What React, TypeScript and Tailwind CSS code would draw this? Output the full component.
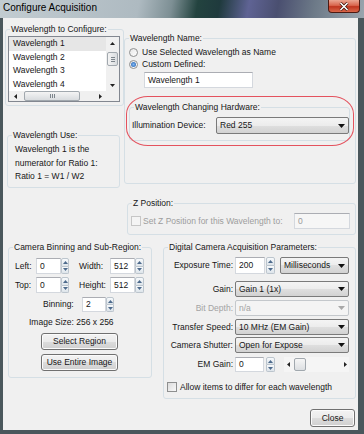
import React from "react";

type Props = { className?: string; children?: React.ReactNode };

function GroupBox({ label, className = "", children }: Props & { label: string }) {
  return (
    <div className={`relative border border-[#d5dfe5] rounded-[3px] ${className}`}>
      <span className="absolute -top-[7px] left-[4px] bg-[#f0f0f0] px-[1px] leading-[12px] whitespace-nowrap">
        {label}
      </span>
      {children}
    </div>
  );
}

function TextBox({ value, className = "", disabled }: { value: string; className?: string; disabled?: boolean }) {
  return (
    <div
      className={`border border-[#d4d8de] border-t-[#abadb3] pl-[3px] flex items-center leading-none ${
        disabled ? "bg-[#f6f6f6] border-[#c9cdd2] text-[#9a9a9a]" : "bg-white"
      } ${className}`}
    >
      {value}
    </div>
  );
}

function Spin({ className = "" }: Props) {
  return (
    <div className={`flex flex-col ${className}`}>
      <div className="flex-1 border border-[#bcc5cd] rounded-t-[2px] bg-linear-to-b from-[#f8fafc] to-[#dde4ea] flex items-center justify-center">
        <svg width="5" height="3" viewBox="0 0 5 3">
          <path d="M0 3L2.5 0L5 3Z" fill="#4d6a8c" />
        </svg>
      </div>
      <div className="flex-1 border border-t-0 border-[#bcc5cd] rounded-b-[2px] bg-linear-to-b from-[#f8fafc] to-[#dde4ea] flex items-center justify-center">
        <svg width="5" height="3" viewBox="0 0 5 3">
          <path d="M0 0L2.5 3L5 0Z" fill="#4d6a8c" />
        </svg>
      </div>
    </div>
  );
}

function Combo({ value, className = "", disabled }: { value: string; className?: string; disabled?: boolean }) {
  return (
    <div
      className={`flex items-center justify-between rounded-[2px] border pl-[3px] pr-[3px] leading-none whitespace-nowrap ${
        disabled
          ? "border-[#c4c8cc] bg-[#f4f4f4] text-[#a3a3a3]"
          : "border-[#7a7a7a] bg-[linear-gradient(#f4f4f4_0%,#ececec_50%,#dfdfdf_50%,#d2d2d2_100%)]"
      } ${className}`}
    >
      <span>{value}</span>
      <svg width="7" height="4" viewBox="0 0 7 4" className="shrink-0">
        <path d="M0 0H7L3.5 4Z" fill={disabled ? "#a8a8a8" : "#111"} />
      </svg>
    </div>
  );
}

function Button({ label, className = "" }: { label: string; className?: string }) {
  return (
    <div
      className={`flex items-center justify-center rounded-[3px] border border-[#707070] bg-[linear-gradient(#f3f3f3_0%,#ebebeb_50%,#dddddd_50%,#cfcfcf_100%)] leading-none shadow-[inset_0_0_0_1px_#fbfbfb] ${className}`}
    >
      {label}
    </div>
  );
}

function Radio({ checked }: { checked?: boolean }) {
  return (
    <div className="w-[9px] h-[9px] rounded-full border border-[#8e8f8f] bg-linear-to-br from-[#e6e6e6] to-[#ffffff] flex items-center justify-center">
      {checked && <div className="w-[5px] h-[5px] rounded-full bg-radial from-[#7fb8f5] to-[#1d5aa8]" />}
    </div>
  );
}

function Check({ disabled }: { disabled?: boolean }) {
  return (
    <div
      className={`w-[10px] h-[10px] border ${
        disabled ? "border-[#c6c6c6] bg-[#f4f4f4]" : "border-[#8e8f8f] bg-linear-to-br from-[#dcdcdc] to-[#f8f8f8]"
      }`}
    />
  );
}

function ThumbH({ className = "" }: Props) {
  return (
    <div
      className={`rounded-[2px] border border-[#a1a8ae] bg-linear-to-b from-[#f4f4f4] to-[#d9dcdf] flex items-center justify-center gap-[1px] ${className}`}
    >
      <div className="w-px h-[4px] bg-[#7d858c]" />
      <div className="w-px h-[4px] bg-[#7d858c]" />
      <div className="w-px h-[4px] bg-[#7d858c]" />
    </div>
  );
}

const ArrowLeft = () => (
  <svg width="3" height="5" viewBox="0 0 3 5">
    <path d="M3 0L0 2.5L3 5Z" fill="#222" />
  </svg>
);
const ArrowRight = () => (
  <svg width="3" height="5" viewBox="0 0 3 5">
    <path d="M0 0L3 2.5L0 5Z" fill="#222" />
  </svg>
);

export default function App() {
  const items = ["Wavelength 1", "Wavelength 2", "Wavelength 3", "Wavelength 4"];

  return (
    <div className="w-[364px] h-[434px] flex flex-col bg-[#4a575c] font-['Liberation_Sans',Arial,sans-serif] text-[8.5px] text-[#161616] overflow-hidden">
      {/* title bar */}
      <div className="h-[18px] flex items-start justify-between bg-[linear-gradient(100deg,#c2ccd1_0%,#aebac1_38%,#7d8f94_47%,#23433f_54%,#1f3a3d_60%,#5f6394_68%,#4a4f70_76%,#6d7a88_86%,#9aa5ae_100%)]">
        <span className="pl-[3px] pt-[2px] text-[10px] leading-[12px] text-black">Configure Acquisition</span>
        <div className="mr-[4px] w-[32px] h-[13px] rounded-b-[4px] border border-t-0 border-[#4d1a12] bg-[linear-gradient(#eaa592_0%,#d9664e_45%,#bf351f_55%,#d9674a_100%)] flex items-center justify-center">
          <svg width="10" height="9" viewBox="0 0 10 9">
            <path d="M1.5 1L8.5 8M8.5 1L1.5 8" stroke="#3a1008" strokeWidth="3" />
            <path d="M1.5 1L8.5 8M8.5 1L1.5 8" stroke="#fff" strokeWidth="1.6" />
          </svg>
        </div>
      </div>

      <div className="flex flex-1 pl-[3px] pr-[6px] pb-[4px]">
        <div className="flex-1 bg-[#f0f0f0] flex flex-col">
          {/* top section */}
          <div className="flex items-start">
            <div className="ml-[2px] w-[119px] flex flex-col">
              <GroupBox label="Wavelength to Configure:" className="mt-[11px] h-[77px]">
                <div className="ml-[2px] mt-[6px] w-[112px] h-[66px] border border-[#828790] bg-white flex flex-col">
                  <div className="flex flex-1">
                    <div className="flex-1 flex flex-col">
                      {items.map((it, i) => (
                        <div
                          key={it}
                          className={`h-[13.5px] leading-[13.5px] pl-[4px] ${i === 0 ? "bg-[#e6e6e6]" : ""}`}
                        >
                          {it}
                        </div>
                      ))}
                    </div>
                    <div className="w-[13px] bg-[#f0f0f0] flex flex-col items-center">
                      <div className="h-[12px] flex items-center justify-center">
                        <svg width="5" height="3" viewBox="0 0 5 3">
                          <path d="M0 3L2.5 0L5 3Z" fill="#222" />
                        </svg>
                      </div>
                      <div className="mt-[3px] w-[11px] h-[14px] rounded-[2px] border border-[#a1a8ae] bg-linear-to-r from-[#f4f4f4] to-[#d9dcdf] flex flex-col items-center justify-center gap-[1px]">
                        <div className="w-[4px] h-px bg-[#7d858c]" />
                        <div className="w-[4px] h-px bg-[#7d858c]" />
                        <div className="w-[4px] h-px bg-[#7d858c]" />
                      </div>
                      <div className="flex-1" />
                      <div className="h-[12px] flex items-center justify-center">
                        <svg width="5" height="3" viewBox="0 0 5 3">
                          <path d="M0 0L2.5 3L5 0Z" fill="#222" />
                        </svg>
                      </div>
                    </div>
                  </div>
                  <div className="h-[10px] flex bg-[#f0f0f0]">
                    <div className="w-[12px] flex items-center justify-center">
                      <ArrowLeft />
                    </div>
                    <ThumbH className="ml-[3px] w-[56px]" />
                    <div className="flex-1" />
                    <div className="w-[12px] flex items-center justify-center">
                      <ArrowRight />
                    </div>
                    <div className="w-[13px] bg-[#f0f0f0]" />
                  </div>
                </div>
              </GroupBox>

              <GroupBox label="Wavelength Use:" className="mt-[29px] ml-[2px] w-[113px] h-[53px] pt-[7px] pl-[7px]">
                <div className="leading-[13.5px]">
                  <div>Wavelength 1 is the</div>
                  <div>numerator for Ratio 1:</div>
                  <div>Ratio 1 = W1 / W2</div>
                </div>
              </GroupBox>
            </div>

            <div className="w-[232px] flex flex-col">
              <GroupBox label="Wavelength Name:" className="mt-[20px] h-[146px] pl-[4px]">
                <div className="mt-[7px] h-[12px] flex items-center gap-[4px]">
                  <Radio />
                  <span>Use Selected Wavelength as Name</span>
                </div>
                <div className="h-[12px] flex items-center gap-[4px]">
                  <Radio checked />
                  <span>Custom Defined:</span>
                </div>
                <TextBox value="Wavelength 1" className="ml-[15px] mt-[2px] w-[109px] h-[16px]" />
                <GroupBox label="Wavelength Changing Hardware:" className="mt-[19px] w-[221px] h-[34px]">
                  <div className="mt-[9px] pl-[2px] flex items-center">
                    <span className="w-[84px]">Illumination Device:</span>
                    <Combo value="Red 255" className="w-[133px] h-[17px]" />
                  </div>
                </GroupBox>
                <div className="absolute left-[1px] top-[57px] w-[228px] h-[50px] rounded-[22px/18px] border border-[#e4525e]" />
              </GroupBox>

              <GroupBox label="Z Position:" className="mt-[19px] ml-[3px] w-[229px] h-[32px]">
                <div className="mt-[9px] h-[16px] pl-[3px] pr-[5px] flex items-center">
                  <Check disabled />
                  <span className="ml-[2px] text-[#9d9d9d]">Set Z Position for this Wavelength to:</span>
                  <TextBox value="0" disabled className="ml-auto w-[56px] h-[16px]" />
                </div>
              </GroupBox>
            </div>
          </div>

          {/* bottom section */}
          <div className="flex items-start mt-[12px]">
            <GroupBox label="Camera Binning and Sub-Region:" className="ml-[5px] w-[144px] h-[131px] pl-[6px]">
              <div className="mt-[10px] h-[16px] flex items-center">
                <span className="w-[21px]">Left:</span>
                <TextBox value="0" className="w-[25px] h-[16px]" />
                <Spin className="w-[8px] h-[16px]" />
                <span className="ml-[10px] w-[31px]">Width:</span>
                <TextBox value="512" className="w-[25px] h-[16px]" />
                <Spin className="w-[9px] h-[16px]" />
              </div>
              <div className="mt-[3px] h-[16px] flex items-center">
                <span className="w-[21px]">Top:</span>
                <TextBox value="0" className="w-[25px] h-[16px]" />
                <Spin className="w-[8px] h-[16px]" />
                <span className="ml-[10px] w-[31px]">Height:</span>
                <TextBox value="512" className="w-[25px] h-[16px]" />
                <Spin className="w-[9px] h-[16px]" />
              </div>
              <div className="mt-[4px] h-[15px] flex items-center">
                <span className="ml-[28px] w-[39px]">Binning:</span>
                <TextBox value="2" className="w-[24px] h-[15px]" />
                <Spin className="w-[8px] h-[15px]" />
              </div>
              <div className="mt-[4px] ml-[14px] leading-[12px]">Image Size: 256 x 256</div>
              <Button label="Select Region" className="mt-[5px] ml-[26px] w-[77px] h-[17px]" />
              <Button label="Use Entire Image" className="mt-[4px] ml-[26px] w-[77px] h-[17px]" />
            </GroupBox>

            <GroupBox label="Digital Camera Acquisition Parameters:" className="ml-[11px] w-[193px] h-[152px]">
              <div className="mt-[9px] h-[17px] flex items-center">
                <span className="w-[71px] pr-[2px] text-right">Exposure Time:</span>
                <TextBox value="200" className="w-[30px] h-[17px]" />
                <Spin className="ml-[1px] w-[9px] h-[17px]" />
                <Combo value="Milliseconds" className="ml-[5px] w-[69px] h-[17px]" />
              </div>
              <div className="mt-[7px] h-[16px] flex items-center">
                <span className="w-[71px] pr-[2px] text-right">Gain:</span>
                <Combo value="Gain 1 (1x)" className="w-[114px] h-[16px]" />
              </div>
              <div className="mt-[3px] h-[16px] flex items-center">
                <span className="w-[71px] pr-[2px] text-right text-[#a3a3a3]">Bit Depth:</span>
                <Combo value="n/a" disabled className="w-[114px] h-[16px]" />
              </div>
              <div className="mt-[3px] h-[16px] flex items-center">
                <span className="w-[71px] pr-[2px] text-right">Transfer Speed:</span>
                <Combo value="10 MHz (EM Gain)" className="w-[114px] h-[16px]" />
              </div>
              <div className="mt-[2px] h-[16px] flex items-center">
                <span className="w-[71px] pr-[2px] text-right">Camera Shutter:</span>
                <Combo value="Open for Expose" className="w-[114px] h-[16px]" />
              </div>
              <div className="mt-[4px] h-[15px] flex items-center">
                <span className="w-[71px] pr-[2px] text-right">EM Gain:</span>
                <TextBox value="0" className="w-[29px] h-[15px]" />
                <Spin className="ml-[2px] w-[9px] h-[15px]" />
                <div className="ml-[9px] w-[65px] h-[15px] bg-[#f5f5f5] flex items-stretch">
                  <div className="w-[8px] flex items-center justify-center">
                    <ArrowLeft />
                  </div>
                  <div className="ml-[2px] my-[1px] w-[12px] rounded-[2px] border border-[#a1a8ae] bg-linear-to-b from-[#f6f6f6] to-[#dcdfe2]" />
                  <div className="flex-1" />
                  <div className="w-[8px] flex items-center justify-center">
                    <ArrowRight />
                  </div>
                </div>
              </div>
              <div className="mt-[10px] h-[10px] ml-[3px] flex items-center">
                <Check />
                <span className="ml-[3px]">Allow items to differ for each wavelength</span>
              </div>
            </GroupBox>
          </div>

          <div className="mt-[10px] pr-[3px] flex justify-end">
            <Button label="Close" className="w-[45px] h-[18px]" />
          </div>
        </div>
      </div>
    </div>
  );
}
